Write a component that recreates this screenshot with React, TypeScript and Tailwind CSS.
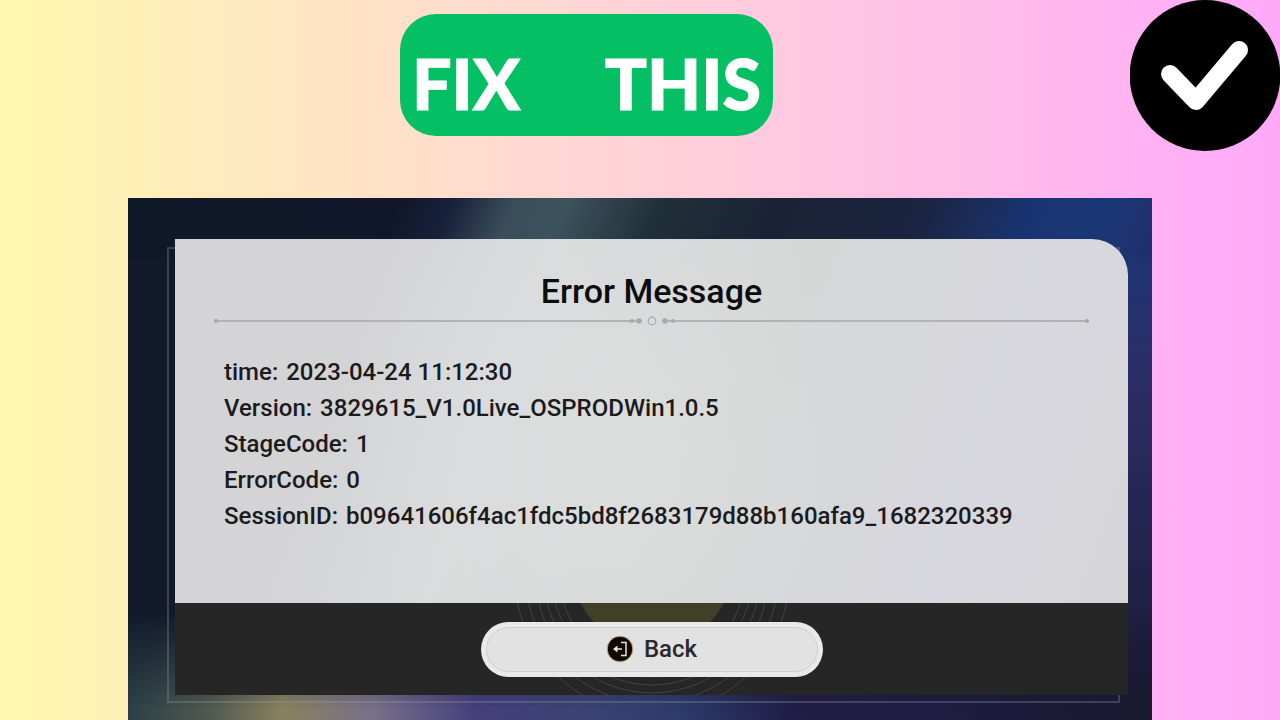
const details = [
  ['time', '2023-04-24 11:12:30'],
  ['Version', '3829615_V1.0Live_OSPRODWin1.0.5'],
  ['StageCode', '1'],
  ['ErrorCode', '0'],
  ['SessionID', 'b09641606f4ac1fdc5bd8f2683179d88b160afa9_1682320339'],
];

function CheckBadge() {
  return (
    <svg viewBox="0 0 150 151" className="h-[151px] w-[150px] shrink-0" aria-hidden="true">
      <ellipse cx="75" cy="75.5" rx="75.3" ry="75.5" fill="#000" />
      <path d="M40 74 L66 101 L109 50" fill="none" stroke="#fff" strokeWidth="18" strokeLinecap="round" strokeLinejoin="round" />
    </svg>
  );
}

function Divider() {
  return (
    <div className="mx-[39px] flex h-3 items-center" aria-hidden="true">
      <span className="size-1 rounded-full bg-[#a5a5a7]" />
      <span className="h-0.5 flex-1 bg-[#b3b3b5]" />
      <svg viewBox="0 0 48 12" className="h-3 w-12" fill="#a9a9ab">
        <path d="M0 5h8v2H0zM40 5h8v2h-8z" fill="#b3b3b5" />
        <circle cx="4" cy="6" r="2" />
        <circle cx="11" cy="6" r="2.8" />
        <circle cx="24" cy="6" r="3.8" fill="none" stroke="#a9a9ab" strokeWidth="1.2" />
        <circle cx="37" cy="6" r="2.8" />
        <circle cx="45" cy="6" r="2" />
      </svg>
      <span className="h-0.5 flex-1 bg-[#b3b3b5]" />
      <span className="size-1 rounded-full bg-[#a5a5a7]" />
    </div>
  );
}

function PanelGlow() {
  return (
    <div className="absolute inset-0" aria-hidden="true">
      <div className="h-[60px] bg-[linear-gradient(112deg,#0f1828_0%,#11172a_26%,#17203a_31%,#3a4d5a_37%,#3c525d_42%,#20303a_51%,#1a2335_62%,#1b2440_76%,#19336f_86%,#1a3775_93%,#1f306b_100%)]" />
      <div className="absolute top-[60px] right-0 bottom-0 w-16 bg-linear-to-b from-[#1c3372] via-[#2c2c64] via-30% to-[#1a1934]" />
      <div className="absolute inset-x-0 bottom-0 h-[110px] bg-[linear-gradient(to_right,#2a4048_0%,#50594f_8%,#88825e_15%,#77708a_24%,#453f7b_34%,#3a4375_45%,#2c3b6b_54%,#211d45_65%,#1e1c40_80%,#191930_100%)] mask-t-from-10% mask-t-to-100%" />
    </div>
  );
}

function FooterOrnament() {
  const rings = [92, 100, 108, 116, 126, 137];
  return (
    <svg viewBox="0 0 320 92" className="absolute top-0 left-1/2 h-full w-80 -translate-x-1/2" aria-hidden="true">
      <circle cx="160" cy="-36" r="80" fill="#403f28" />
      {rings.map((r) => (
        <circle key={r} cx="160" cy="-26" r={r} fill="none" stroke="#43433e" strokeWidth="1" />
      ))}
    </svg>
  );
}

function BackIcon() {
  return (
    <svg viewBox="0 0 28 28" className="size-7" aria-hidden="true">
      <circle cx="14" cy="14" r="12.8" fill="#0d0905" stroke="#c8a468" strokeWidth="1" />
      <path d="M15 7.5h5v13h-5M16 14H8" fill="none" stroke="#f0e2c4" strokeWidth="1.5" />
      <path d="M11.5 10.5v7L7 14z" fill="#f0e2c4" />
    </svg>
  );
}

export default function App() {
  return (
    <main className="flex min-h-screen flex-col bg-linear-to-r from-[#fff7ad] to-[#ffa9f9] font-['Roboto',sans-serif]">
      <header className="flex items-start justify-between pl-[31.25%]">
        <h1 className="mt-3.5 flex h-[122px] w-[373px] items-center justify-between rounded-[36px] bg-[#04bf63] px-3 pt-4 font-['Lato',sans-serif] text-[70px] leading-none font-black text-white [-webkit-text-stroke:1px_white]">
          <span>FIX</span>
          <span>THIS</span>
        </h1>
        <CheckBadge />
      </header>

      <section className="relative mx-[10%] mt-[47px] mb-px flex-1 bg-[#11192b] pt-[41px] pr-6 pb-[25px] pl-[47px]">
        <PanelGlow />
        <div className="absolute top-[49px] right-8 bottom-[17px] left-[39px] border-2 border-[#9a9aac]/30" />
        <article className="relative">
          <div className="h-[364px] rounded-tr-[36px] bg-[#d6d6d8] bg-[radial-gradient(ellipse_260px_320px_at_45%_60%,#dcdddd_0%,transparent_100%),linear-gradient(110deg,#d4d4d6_20%,#d9dbdc_35%,#d5d7d7_60%,#d8d7df_82%,#d6d6d9_100%)] pt-8">
            <h2 className="text-center text-[34px] leading-10 font-medium text-[#0c0c0e]">Error Message</h2>
            <div className="mt-1">
              <Divider />
            </div>
            <dl className="mt-[27px] pl-[49px] text-2xl leading-9 font-medium text-[#1b1b1e]">
              {details.map(([label, value]) => (
                <div key={label} className="flex gap-2 whitespace-nowrap">
                  <dt>{label}:</dt>
                  <dd>{value}</dd>
                </div>
              ))}
            </dl>
          </div>
          <footer className="relative flex h-[92px] items-center justify-center bg-[#262626]">
            <FooterOrnament />
            <button
              type="button"
              className="relative h-[55px] w-[342px] rounded-full bg-[#e9e9e9] p-[5px] text-2xl font-medium text-[#2a2a2c]"
            >
              <span className="flex h-full items-center justify-center gap-2.5 rounded-full border border-[#cfcfcf] bg-[#e2e2e2]">
                <BackIcon />
                Back
              </span>
            </button>
          </footer>
        </article>
      </section>
    </main>
  );
}
